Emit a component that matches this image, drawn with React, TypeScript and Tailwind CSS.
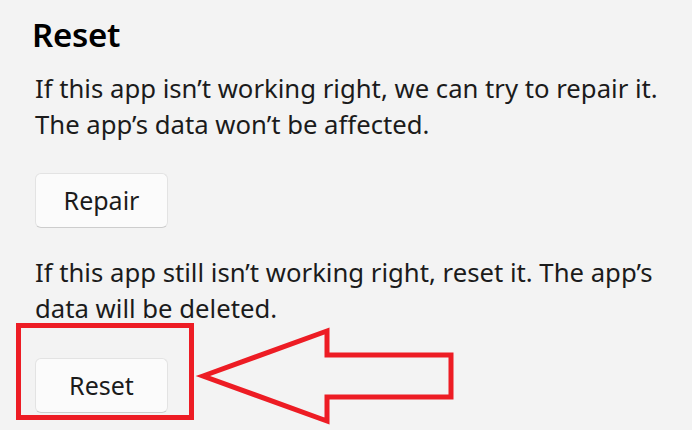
import React from "react";

const font = { fontFamily: '"Noto Sans", "Open Sans", sans-serif' };

function ActionButton({ label }: { label: string }) {
  return (
    <button
      type="button"
      className="flex h-[55px] w-[133px] items-center justify-center rounded-[6px] border border-[#e3e3e3] border-b-[#cdcdcd] bg-[#fbfbfb] text-[25px] text-[#1b1b1b]"
    >
      {label}
    </button>
  );
}

export default function App() {
  return (
    <div
      className="relative h-[430px] w-[692px] overflow-hidden bg-[#f3f3f3] pl-[35px] pt-[13px] text-[#1b1b1b]"
      style={font}
    >
      <h2 className="-ml-[3px] text-[33px] font-semibold leading-[44px] tracking-[-0.3px] text-black">Reset</h2>

      <p className="mt-[14px] text-[25.7px] leading-[36px]">
        If this app isn’t working right, we can try to repair it.
        <br />
        The app’s data won’t be affected.
      </p>

      <div className="mt-[30px]">
        <ActionButton label="Repair" />
      </div>

      <p className="mt-[27px] text-[25.7px] leading-[36px]">
        If this app still isn’t working right, reset it. The app’s
        <br />
        data will be deleted.
      </p>

      <div className="mt-[31px]">
        <ActionButton label="Reset" />
      </div>

      {/* annotation: highlight box */}
      <div className="pointer-events-none absolute left-[16px] top-[323px] h-[97px] w-[178px] border-[5px] border-[#ed1c24]" />

      {/* annotation: arrow */}
      <svg
        className="pointer-events-none absolute left-0 top-0"
        width="692"
        height="430"
        viewBox="0 0 692 430"
      >
        <path
          d="M203 376 L327 331 L327 355 L451 355 L451 397 L327 397 L327 421 Z"
          fill="none"
          stroke="#ed1c24"
          strokeWidth="5"
          strokeLinejoin="miter"
        />
      </svg>
    </div>
  );
}
